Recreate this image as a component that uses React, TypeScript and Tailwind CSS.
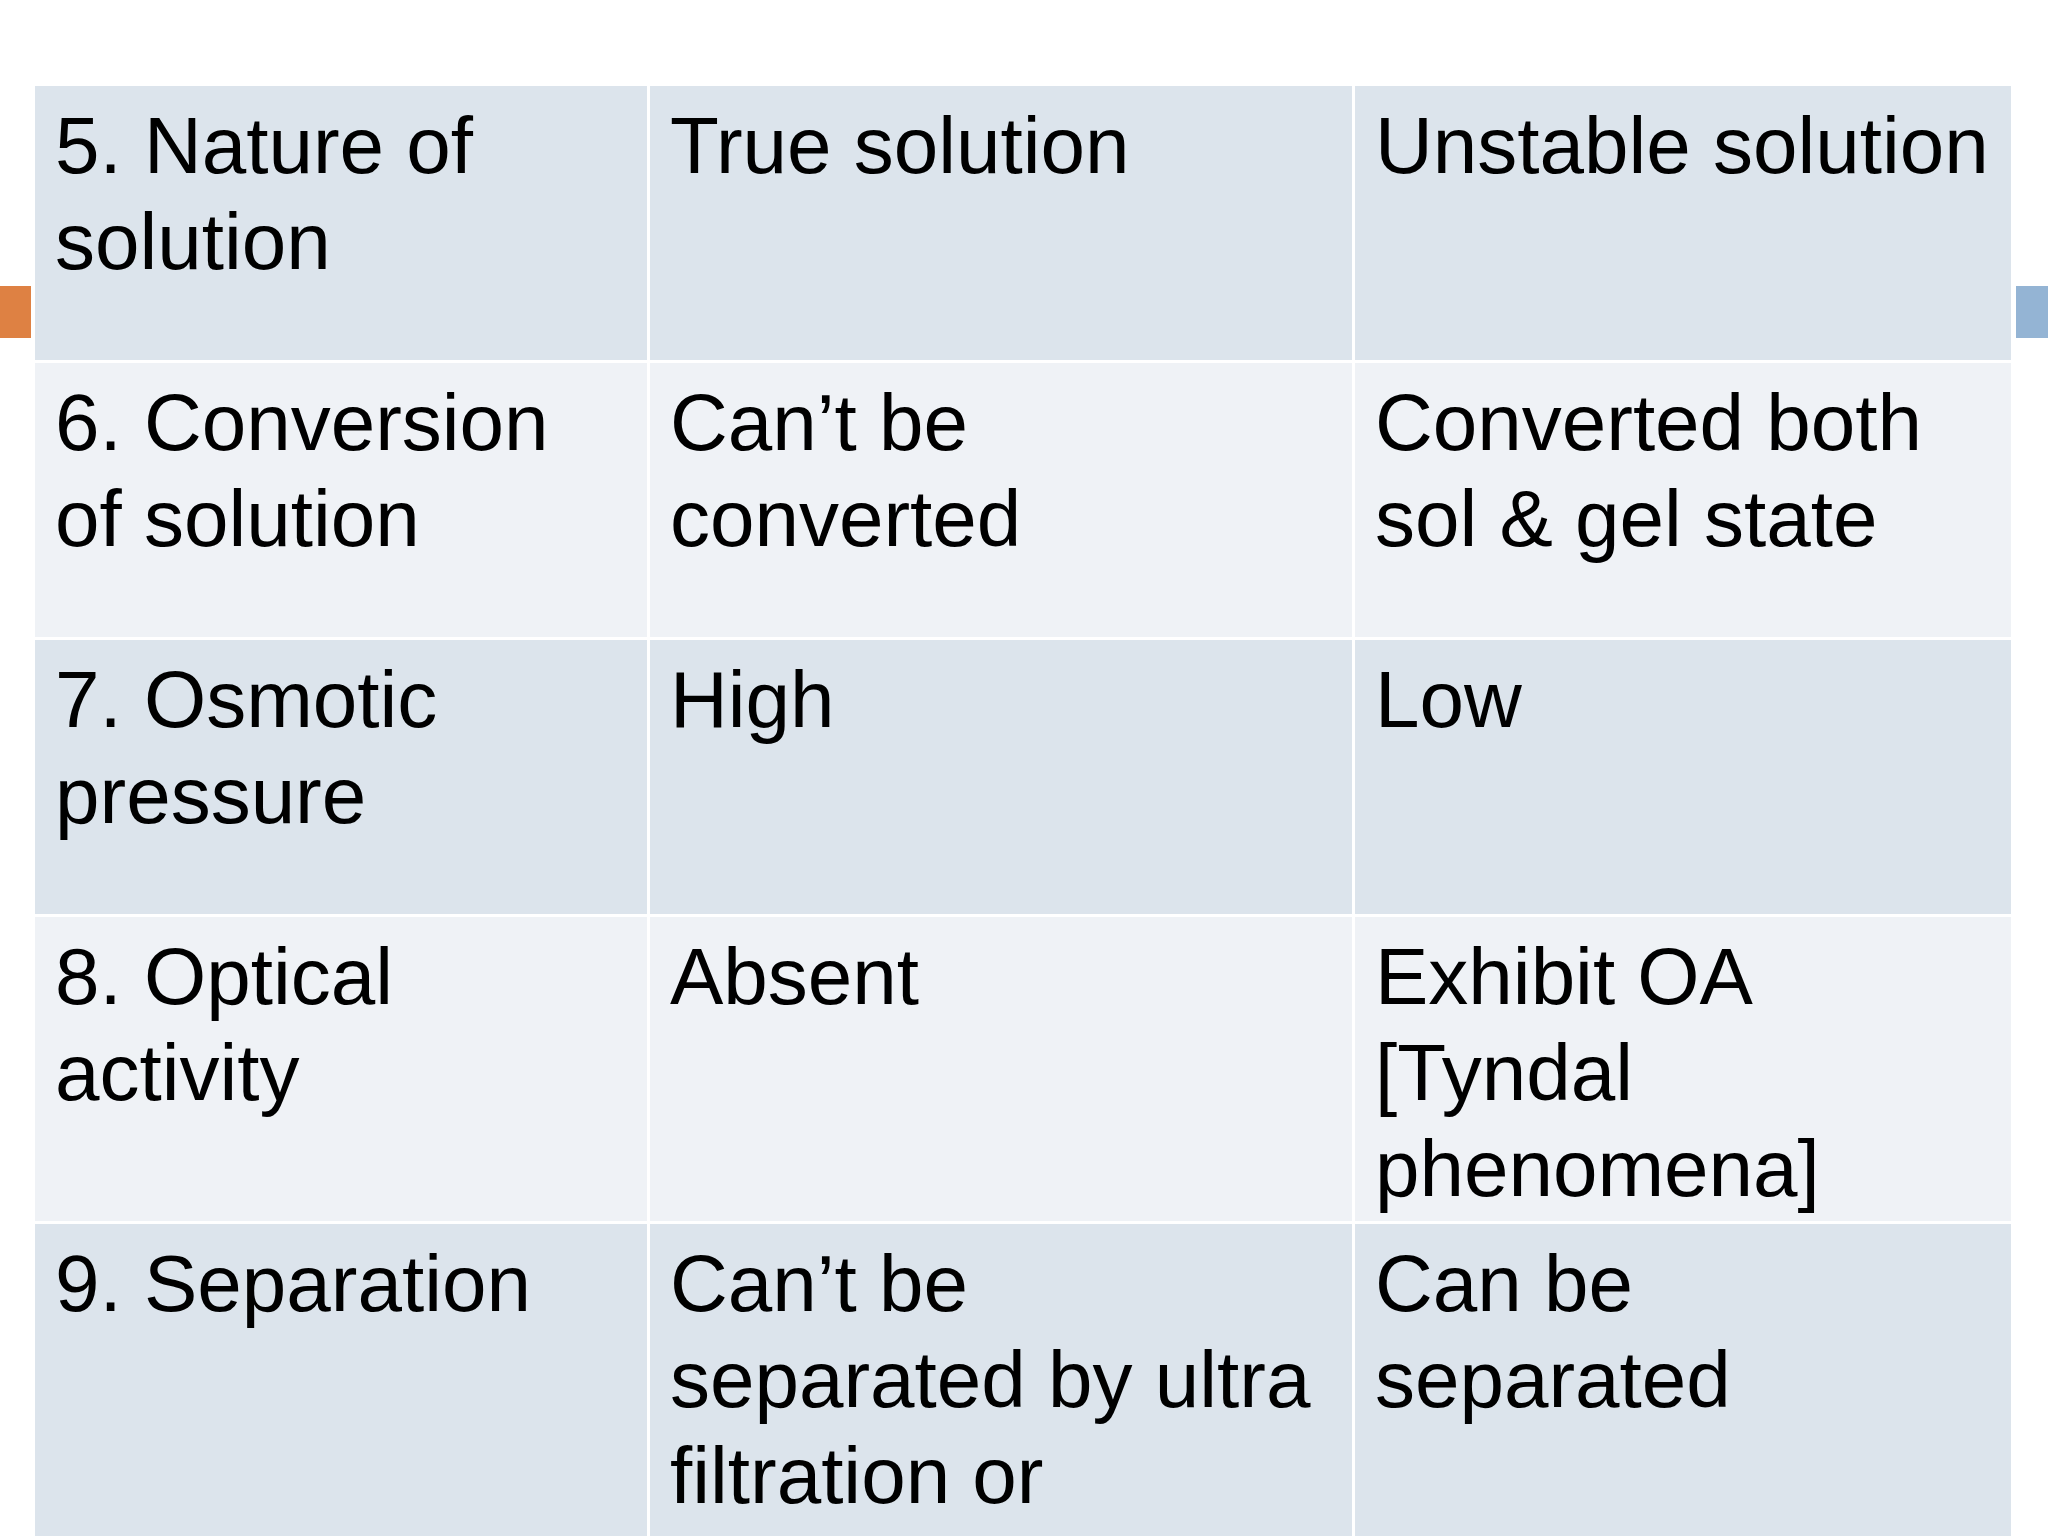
const rows: string[][][] = [
  [["5. Nature of", "solution"], ["True solution"], ["Unstable solution"]],
  [["6. Conversion", "of solution"], ["Can’t be", "converted"], ["Converted both", "sol & gel state"]],
  [["7. Osmotic", "pressure"], ["High"], ["Low"]],
  [["8. Optical", "activity"], ["Absent"], ["Exhibit OA", "[Tyndal", "phenomena]"]],
  [["9. Separation"], ["Can’t be", "separated by ultra", "filtration or"], ["Can be", "separated"]],
];

function Cell({ lines, odd }: { lines: string[]; odd: boolean }) {
  return (
    <div
      className={
        "overflow-hidden pl-[20px] pr-2 pt-[12px] text-[80px] leading-[96px] text-black whitespace-nowrap " +
        (odd ? "bg-[#dce4ec]" : "bg-[#eff2f6]")
      }
    >
      {lines.map((l) => (
        <div key={l}>{l}</div>
      ))}
    </div>
  );
}

export default function App() {
  return (
    <div
      className="flex h-[1536px] w-[2048px] overflow-hidden bg-white"
      style={{ fontFamily: '"Liberation Sans", Arial, sans-serif' }}
    >
      <div className="mt-[286px] h-[52px] w-[31px] shrink-0 bg-[#de8143]" />
      <div className="ml-[4px] mt-[86px] grid h-[1450px] shrink-0 grid-cols-[612px_702px_656px] grid-rows-[274px_274px_274px_304px_1fr] gap-[3px] bg-white">
        {rows.map((row, i) =>
          row.map((lines, j) => <Cell key={`${i}-${j}`} lines={lines} odd={i % 2 === 0} />)
        )}
      </div>
      <div className="ml-[5px] mt-[286px] h-[52px] flex-1 bg-[#94b4d4]" />
    </div>
  );
}
